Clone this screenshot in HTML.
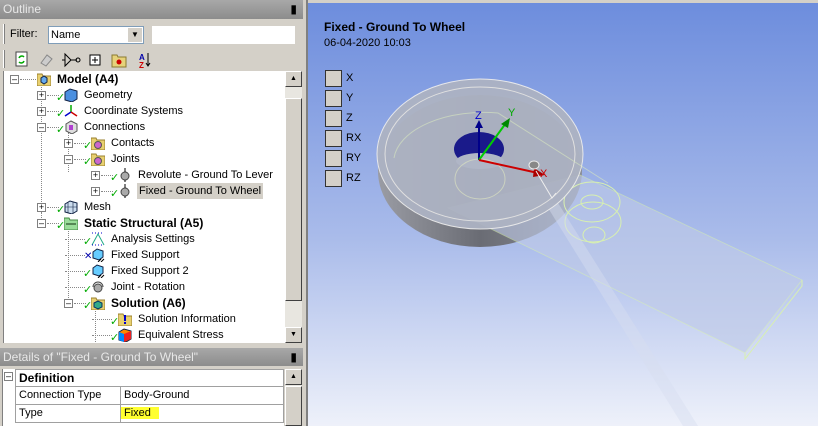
<!DOCTYPE html>
<html><head><meta charset="utf-8"><style>
*{margin:0;padding:0;box-sizing:border-box}
body{width:818px;height:426px;overflow:hidden;background:#d4d0c8;font-family:Tahoma,"Liberation Sans","DejaVu Sans",sans-serif;font-size:11px;color:#000;position:relative}
.abs{position:absolute}
.hdr{background:linear-gradient(#a8a8a8,#8c8c8c);color:#e8e8e8;font-size:12px;padding-left:3px;line-height:18px}
.row{position:absolute;height:16px;line-height:16px;white-space:nowrap}
.exp{position:absolute;width:9px;height:9px;border:1px solid #808080;background:#fff;font-size:9px;line-height:7px;text-align:center;color:#000}
.ic{position:absolute;width:14px;height:14px}
.chk{position:absolute;color:#0a0;font-size:11px;font-weight:bold}
.vl{position:absolute;border-left:1px dotted #888}
.hl{position:absolute;border-top:1px dotted #888}
</style></head><body>
<div class="abs hdr" style="left:0;top:0;width:303px;height:19px">Outline<span style="position:absolute;right:6px;color:#000">▮</span></div>
<div class="abs" style="left:3px;top:24px;width:2px;height:20px;border-left:1px solid #fff;border-right:1px solid #808080"></div>
<div class="abs" style="left:10px;top:28px">Filter:</div>
<div class="abs" style="left:48px;top:26px;width:96px;height:18px;background:#fff;border:1px solid #7f9db9;padding-left:2px;line-height:16px">Name<span style="position:absolute;right:1px;top:1px;width:14px;height:14px;background:#d4d0c8;font-size:8px;text-align:center;line-height:14px">▼</span></div>
<div class="abs" style="left:152px;top:26px;width:143px;height:18px;background:#fff"></div>
<div class="abs" style="left:3px;top:50px;width:2px;height:18px;border-left:1px solid #fff;border-right:1px solid #808080"></div>
<svg class="abs" style="left:14px;top:50px" width="150" height="20">
<rect x="2" y="2" width="11" height="14" fill="#fff" stroke="#444"/><path d="M5 8a3 3 0 0 1 5-1M10 11a3 3 0 0 1-5 1" stroke="#0a0" fill="none" stroke-width="1.5"/>
<path d="M27 13l6-8 5 4-6 7z" fill="#ccc" stroke="#888"/>
<path d="M51 4v12l6-6z M57 10h6 M48 10h3" stroke="#000" fill="none"/><circle cx="64" cy="10" r="2" fill="none" stroke="#000"/>
<rect x="76" y="5" width="10" height="10" fill="#fff" stroke="#000"/><path d="M78 10h6M81 7v6" stroke="#000"/>
<path d="M98 5h5l1 2h8v10h-14z" fill="#e6d27a" stroke="#8a7a30"/><circle cx="105" cy="12" r="2.5" fill="#c00"/>
<text x="125" y="10" font-size="8" fill="#00a" font-weight="bold">A</text><text x="125" y="18" font-size="8" fill="#c00" font-weight="bold">Z</text><path d="M134 3v13M132 13l2 3 2-3" stroke="#000" fill="none"/>
</svg>
<div class="abs" style="left:3px;top:71px;width:284px;height:272px;background:#fff;overflow:hidden;border-left:1px solid #808080">
<div class="vl" style="left:37px;top:13px;height:136px"></div>
<div class="vl" style="left:64px;top:61px;height:40px"></div>
<div class="vl" style="left:37px;top:141px;height:16px"></div>
<div class="vl" style="left:64px;top:157px;height:80px"></div>
<div class="vl" style="left:91px;top:237px;height:40px"></div>
</div>
<div class="abs" style="left:0;top:71px;width:285px;height:272px;overflow:hidden">
<div class="exp" style="left:10px;top:4px">–</div><div class="hl" style="left:20px;top:8px;width:16px"></div>
<svg class="ic" style="left:37px;top:1px"><path d="M0 2h5l1 2h8v10H0z" fill="#e8d070" stroke="#9a8030"/><path d="M4 6l3-2 3 2v4l-3 2-3-2z" fill="#6ae" stroke="#124"/></svg>
<div class="row" style="left:57px;top:0;font-weight:bold;font-size:12px">Model (A4)</div>

<div class="exp" style="left:37px;top:20px">+</div><div class="hl" style="left:47px;top:24px;width:12px"></div>
<div class="chk" style="left:56px;top:20px">✓</div>
<svg class="ic" style="left:64px;top:17px"><path d="M1 4l5-3 7 2v8l-5 3-7-2z" fill="#4a8fe0" stroke="#124"/></svg>
<div class="row" style="left:84px;top:16px">Geometry</div>

<div class="exp" style="left:37px;top:36px">+</div><div class="hl" style="left:47px;top:40px;width:12px"></div>
<div class="chk" style="left:56px;top:36px">✓</div>
<svg class="ic" style="left:64px;top:33px"><path d="M7 8V1" stroke="#0a0" stroke-width="1.5"/><path d="M7 8l-6 4" stroke="#00c" stroke-width="1.5"/><path d="M7 8l6 4" stroke="#c00" stroke-width="1.5"/></svg>
<div class="row" style="left:84px;top:32px">Coordinate Systems</div>

<div class="exp" style="left:37px;top:52px">–</div><div class="hl" style="left:47px;top:56px;width:12px"></div>
<div class="chk" style="left:56px;top:52px">✓</div>
<svg class="ic" style="left:64px;top:49px"><path d="M2 4l5-3 6 3v7l-5 3-6-3z" fill="#ddd" stroke="#555"/><rect x="5" y="5" width="4" height="5" fill="#b040d0"/></svg>
<div class="row" style="left:84px;top:48px">Connections</div>

<div class="exp" style="left:64px;top:68px">+</div><div class="hl" style="left:74px;top:72px;width:12px"></div>
<div class="chk" style="left:83px;top:68px">✓</div>
<svg class="ic" style="left:91px;top:65px"><path d="M0 2h5l1 2h8v10H0z" fill="#e8d070" stroke="#9a8030"/><circle cx="7" cy="9" r="3.5" fill="#c6c" stroke="#555"/></svg>
<div class="row" style="left:111px;top:64px">Contacts</div>

<div class="exp" style="left:64px;top:84px">–</div><div class="hl" style="left:74px;top:88px;width:12px"></div>
<div class="chk" style="left:83px;top:84px">✓</div>
<svg class="ic" style="left:91px;top:81px"><path d="M0 2h5l1 2h8v10H0z" fill="#e8d070" stroke="#9a8030"/><circle cx="7" cy="9" r="3.5" fill="#c6c" stroke="#555"/></svg>
<div class="row" style="left:111px;top:80px">Joints</div>

<div class="exp" style="left:91px;top:100px">+</div><div class="hl" style="left:101px;top:104px;width:12px"></div>
<div class="chk" style="left:110px;top:100px">✓</div>
<svg class="ic" style="left:118px;top:97px"><circle cx="7" cy="8" r="4" fill="#aaa" stroke="#444"/><path d="M7 0v4M7 12v2" stroke="#000"/></svg>
<div class="row" style="left:138px;top:96px">Revolute - Ground To Lever</div>

<div class="exp" style="left:91px;top:116px">+</div><div class="hl" style="left:101px;top:120px;width:12px"></div>
<div class="chk" style="left:110px;top:116px">✓</div>
<svg class="ic" style="left:118px;top:113px"><circle cx="7" cy="8" r="4" fill="#aaa" stroke="#444"/><path d="M7 0v4M7 12v2" stroke="#000"/></svg>
<div class="row" style="left:137px;top:112px;background:#d4d0c8;padding:0 2px">Fixed - Ground To Wheel</div>

<div class="exp" style="left:37px;top:132px">+</div><div class="hl" style="left:47px;top:136px;width:12px"></div>
<div class="chk" style="left:56px;top:132px">✓</div>
<svg class="ic" style="left:64px;top:129px"><path d="M1 4l5-3 7 2v8l-5 3-7-2z" fill="#cde" stroke="#124"/><path d="M1 7l12 0M4 2v11M9 2v11" stroke="#124" stroke-width=".6"/></svg>
<div class="row" style="left:84px;top:128px">Mesh</div>

<div class="exp" style="left:37px;top:148px">–</div><div class="hl" style="left:47px;top:152px;width:12px"></div>
<div class="chk" style="left:56px;top:148px">✓</div>
<svg class="ic" style="left:64px;top:145px"><path d="M0 2h5l1 2h8v10H0z" fill="#9d9" stroke="#484"/><rect x="2" y="7" width="10" height="2" fill="#585"/></svg>
<div class="row" style="left:84px;top:144px;font-weight:bold;font-size:12px">Static Structural (A5)</div>

<div class="hl" style="left:65px;top:168px;width:20px"></div><div class="chk" style="left:83px;top:164px">✓</div>
<svg class="ic" style="left:91px;top:161px"><path d="M1 13l6-11 6 11" stroke="#2a8" fill="none"/><path d="M1 1h12M1 13h12" stroke="#00c" stroke-dasharray="1 2"/></svg>
<div class="row" style="left:111px;top:160px">Analysis Settings</div>

<div class="hl" style="left:65px;top:184px;width:20px"></div><div class="abs" style="left:84px;top:180px;color:#00a;font-size:10px">✕</div>
<svg class="ic" style="left:91px;top:177px"><path d="M2 4l4-3 6 2v6l-4 3-6-2z" fill="#6cf" stroke="#124"/><path d="M7 14l3-3M10 14l3-3" stroke="#000"/></svg>
<div class="row" style="left:111px;top:176px">Fixed Support</div>

<div class="hl" style="left:65px;top:200px;width:20px"></div><div class="chk" style="left:83px;top:196px">✓</div>
<svg class="ic" style="left:91px;top:193px"><path d="M2 4l4-3 6 2v6l-4 3-6-2z" fill="#6cf" stroke="#124"/><path d="M7 14l3-3M10 14l3-3" stroke="#000"/></svg>
<div class="row" style="left:111px;top:192px">Fixed Support 2</div>

<div class="hl" style="left:65px;top:216px;width:20px"></div><div class="chk" style="left:83px;top:212px">✓</div>
<svg class="ic" style="left:91px;top:209px"><circle cx="7" cy="8" r="4" fill="#aaa" stroke="#444"/><path d="M2 7a5 5 0 0 1 10 0" stroke="#444" fill="none"/></svg>
<div class="row" style="left:111px;top:208px">Joint - Rotation</div>

<div class="exp" style="left:64px;top:228px">–</div><div class="hl" style="left:74px;top:232px;width:12px"></div>
<div class="chk" style="left:83px;top:228px">✓</div>
<svg class="ic" style="left:91px;top:225px"><path d="M0 2h5l1 2h8v10H0z" fill="#e8d070" stroke="#9a8030"/><path d="M3 7l4-2 4 2v4l-4 2-4-2z" fill="#3a8" stroke="#036"/></svg>
<div class="row" style="left:111px;top:224px;font-weight:bold;font-size:12px">Solution (A6)</div>

<div class="hl" style="left:92px;top:248px;width:20px"></div><div class="chk" style="left:110px;top:244px">✓</div>
<svg class="ic" style="left:118px;top:241px"><path d="M0 2h5l1 2h8v10H0z" fill="#e8d070" stroke="#9a8030"/><rect x="6" y="3" width="2" height="6" fill="#00c"/><rect x="6" y="10" width="2" height="2" fill="#00c"/></svg>
<div class="row" style="left:138px;top:240px">Solution Information</div>

<div class="hl" style="left:92px;top:264px;width:20px"></div><div class="chk" style="left:110px;top:260px">✓</div>
<svg class="ic" style="left:118px;top:257px"><path d="M1 4l5-3 7 2v8l-5 3-7-2z" fill="#f80" stroke="#124"/><path d="M1 4l5 2v8l-5-2z" fill="#08f"/><path d="M6 6l7-3v8l-7 3z" fill="#e22"/></svg>
<div class="row" style="left:138px;top:256px">Equivalent Stress</div>
</div>
<div class="abs" style="left:285px;top:71px;width:17px;height:272px;background:#e8e6e0"></div>
<div class="abs" style="left:285px;top:71px;width:17px;height:16px;background:#d4d0c8;border:1px solid;border-color:#fff #404040 #404040 #fff;font-size:7px;text-align:center;line-height:14px">▲</div>
<div class="abs" style="left:285px;top:98px;width:17px;height:203px;background:#d4d0c8;border:1px solid;border-color:#fff #404040 #404040 #fff"></div>
<div class="abs" style="left:285px;top:327px;width:17px;height:16px;background:#d4d0c8;border:1px solid;border-color:#fff #404040 #404040 #fff;font-size:7px;text-align:center;line-height:14px">▼</div>

<div class="abs hdr" style="left:0;top:348px;width:303px;height:18px">Details of "Fixed - Ground To Wheel"<span style="position:absolute;right:6px;color:#000">▮</span></div>
<div class="abs" style="left:2px;top:369px;width:282px;height:57px;background:#fff;border-left:1px solid #808080"></div>
<div class="abs" style="left:4px;top:372px;width:9px;height:9px;border:1px solid #808080;font-size:9px;line-height:7px;text-align:center">–</div>
<div class="abs" style="left:15px;top:369px;width:269px;height:18px;border:1px solid #a0a0a0;font-weight:bold;font-size:12px;padding-left:3px;line-height:16px">Definition</div>
<div class="abs" style="left:15px;top:387px;width:106px;height:18px;border:1px solid #a0a0a0;border-top:0;padding-left:3px;line-height:17px">Connection Type</div>
<div class="abs" style="left:121px;top:387px;width:163px;height:18px;border:1px solid #a0a0a0;border-top:0;border-left:0;padding-left:3px;line-height:17px">Body-Ground</div>
<div class="abs" style="left:15px;top:405px;width:106px;height:18px;border:1px solid #a0a0a0;border-top:0;padding-left:3px;line-height:17px">Type</div>
<div class="abs" style="left:121px;top:405px;width:163px;height:18px;border:1px solid #a0a0a0;border-top:0;border-left:0;line-height:17px"><span style="background:#ffff30;padding:0 8px 0 3px">Fixed</span></div>
<div class="abs" style="left:285px;top:369px;width:17px;height:57px;background:#e8e6e0"></div>
<div class="abs" style="left:285px;top:369px;width:17px;height:16px;background:#d4d0c8;border:1px solid;border-color:#fff #404040 #404040 #fff;font-size:7px;text-align:center;line-height:14px">▲</div>
<div class="abs" style="left:285px;top:386px;width:17px;height:40px;background:#d4d0c8;border:1px solid;border-color:#fff #404040 #404040 #fff"></div>

<div class="abs" style="left:306px;top:0;width:2px;height:426px;background:#808080"></div>
<div class="abs" style="left:308px;top:3px;width:510px;height:423px;background:linear-gradient(#6d8ddd,#a9bbea 55%,#eef1fa)"></div>
<svg class="abs" style="left:308px;top:3px" width="510" height="423">
<defs><linearGradient id="sd" x1="0" x2="1"><stop offset="0" stop-color="#9a9ca4"/><stop offset=".5" stop-color="#6a6c74"/><stop offset="1" stop-color="#8a8e98"/></linearGradient></defs>
<ellipse cx="172" cy="168" rx="102" ry="76" fill="url(#sd)"/>
<path d="M140 205 L272 172 L494 277 L437 350z" fill="#c0cbe8" opacity=".6" stroke="#d8f0b0" stroke-width=".8"/>
<path d="M437 350 L437 356 L494 283 L494 277" fill="none" stroke="#d8f0b0"/>
<ellipse cx="284" cy="199" rx="28" ry="20" fill="none" stroke="#d8f0b0"/>
<ellipse cx="285" cy="219" rx="28" ry="20" fill="none" stroke="#d8f0b0"/>
<ellipse cx="284" cy="199" rx="11" ry="7" fill="none" stroke="#d8f0b0"/>
<ellipse cx="286" cy="232" rx="11" ry="8" fill="none" stroke="#d8f0b0"/>
<path d="M237 200 L250 200 L390 423 L375 423z" fill="#d6deef" opacity=".45"/>
<ellipse cx="172" cy="151" rx="103" ry="75" fill="#adb3c3" stroke="#ececec" opacity=".95"/>
<ellipse cx="172" cy="151" rx="95" ry="67" fill="none" stroke="#e0e0e0"/>
<path d="M86 155 A90 50 0 0 1 190 110 L300 180" stroke="#d8e8c0" fill="none" opacity=".6"/>
<ellipse cx="171" cy="146" rx="25" ry="17" fill="#1a1a8a"/>
<ellipse cx="172" cy="158" rx="24" ry="8" fill="#b0b6c6"/>
<ellipse cx="172" cy="176" rx="25" ry="20" fill="none" stroke="#d8e0c0" opacity=".7"/>
<path d="M171 157 L171 122" stroke="#00008a" stroke-width="2"/><path d="M167 125 l4 -8 4 8z" fill="#00008a"/>
<path d="M171 157 L198 120" stroke="#0c0" stroke-width="2"/><path d="M193 121 l9 -6 -2 10z" fill="#080"/>
<path d="M171 157 L230 170" stroke="#c00" stroke-width="2"/><path d="M226 165 l11 7 -12 2z" fill="#a00"/>
<text x="167" y="116" font-size="11" fill="#00c" font-family="Liberation Sans">Z</text>
<text x="200" y="113" font-size="11" fill="#0a0" font-family="Liberation Sans">Y</text>
<text x="232" y="174" font-size="11" fill="#c00" font-family="Liberation Sans">X</text>
<ellipse cx="226" cy="162" rx="5" ry="4" fill="#888" stroke="#eee"/>
<path d="M228 168 L244 195 L248 190" stroke="#eee" fill="none"/>
</svg>
<div class="abs" style="left:324px;top:20px;font-weight:bold;font-size:12px">Fixed - Ground To Wheel</div>
<div class="abs" style="left:324px;top:37px;font-size:11px">06-04-2020 10:03</div>
<div class="abs" style="left:325px;top:68px;line-height:20px;font-size:11px">
<div><span style="display:inline-block;width:17px;height:17px;background:#d4d0c8;border:1px solid #333;vertical-align:middle;margin-right:4px"></span>X</div>
<div><span style="display:inline-block;width:17px;height:17px;background:#d4d0c8;border:1px solid #333;vertical-align:middle;margin-right:4px"></span>Y</div>
<div><span style="display:inline-block;width:17px;height:17px;background:#d4d0c8;border:1px solid #333;vertical-align:middle;margin-right:4px"></span>Z</div>
<div><span style="display:inline-block;width:17px;height:17px;background:#d4d0c8;border:1px solid #333;vertical-align:middle;margin-right:4px"></span>RX</div>
<div><span style="display:inline-block;width:17px;height:17px;background:#d4d0c8;border:1px solid #333;vertical-align:middle;margin-right:4px"></span>RY</div>
<div><span style="display:inline-block;width:17px;height:17px;background:#d4d0c8;border:1px solid #333;vertical-align:middle;margin-right:4px"></span>RZ</div>
</div>
</body></html>
